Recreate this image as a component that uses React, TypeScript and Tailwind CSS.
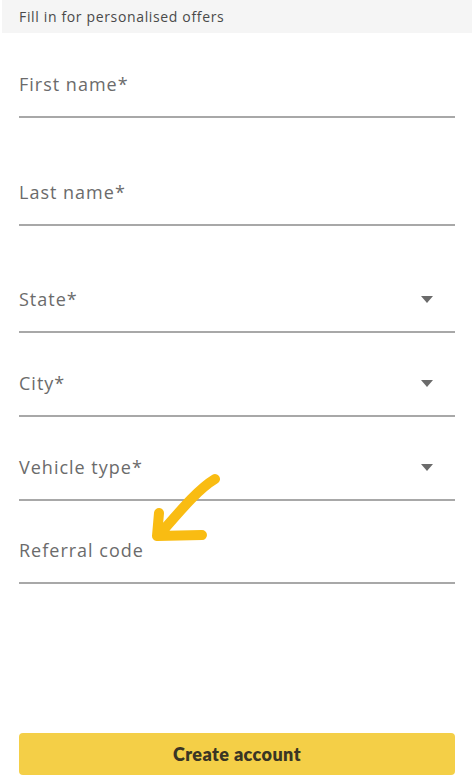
import React from "react";

const fields = [
  { label: "First name*", select: false, gap: "mt-[39px]" },
  { label: "Last name*", select: false, gap: "mt-[62px]" },
  { label: "State*", select: true, gap: "mt-[61px]" },
  { label: "City*", select: true, gap: "mt-[38px]" },
  { label: "Vehicle type*", select: true, gap: "mt-[38px]" },
  { label: "Referral code", select: false, gap: "mt-[37px]" },
];

const Caret = () => (
  <svg width="12" height="7" viewBox="0 0 12 7" className="mr-[22px] mb-[8px]">
    <path d="M0 0h12L6 7z" fill="#6b6b6b" />
  </svg>
);

const App = () => {
  return (
    <div
      className="relative w-[474px] h-[781px] bg-white overflow-hidden"
      style={{ fontFamily: "'Open Sans', Roboto, sans-serif" }}
    >
      <div className="mx-[2px] h-[33px] bg-[#f5f5f5] flex items-center px-[17px]">
        <span className="text-[14px] text-[#4a4a4a] tracking-[0.65px]">Fill in for personalised offers</span>
      </div>

      <div className="px-[19px]">
        {fields.map((f) => (
          <div
            key={f.label}
            className={`${f.gap} h-[46px] border-b-[2px] border-[#a8a8a8] flex items-end justify-between pb-[20px]`}
          >
            <span className="text-[18px] leading-[24px] text-[#6b6b6b] tracking-[1px]">{f.label}</span>
            {f.select && <Caret />}
          </div>
        ))}

        <button className="mt-[149px] w-full h-[42px] rounded-[4px] bg-[#f4cf47] flex items-center justify-center">
          <span
            className="text-[18px] font-extrabold text-[#3a3524] tracking-[0.4px]"
            style={{ fontFamily: "Lato, 'Open Sans', sans-serif" }}
          >
            Create account
          </span>
        </button>
      </div>

      {/* hand-drawn annotation arrow */}
      <svg className="absolute left-0 top-0 pointer-events-none" width="474" height="781">
        <path
          d="M215 479 C 200 488, 185 505, 160 534 M159 513 L157 536 L202 535"
          fill="none"
          stroke="#f9bc12"
          strokeWidth="10"
          strokeLinecap="round"
          strokeLinejoin="round"
        />
      </svg>
    </div>
  );
};

export default App;
